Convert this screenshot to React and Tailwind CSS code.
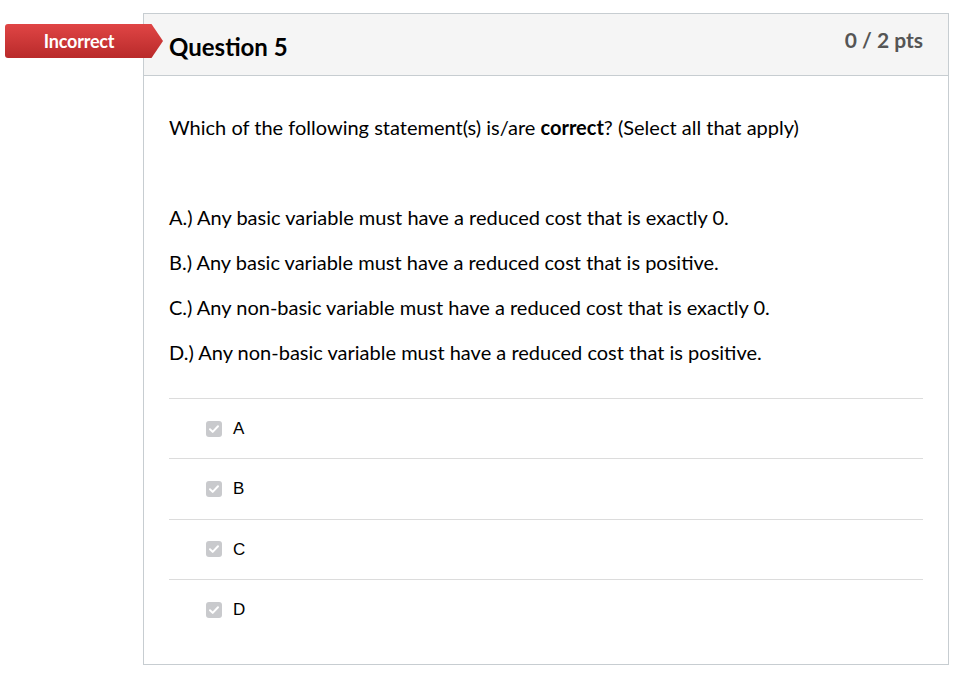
import React from "react";

const options = [
  "A.) Any basic variable must have a reduced cost that is exactly 0.",
  "B.) Any basic variable must have a reduced cost that is positive.",
  "C.) Any non-basic variable must have a reduced cost that is exactly 0.",
  "D.) Any non-basic variable must have a reduced cost that is positive.",
];

function Check() {
  return (
    <span className="flex h-[16px] w-[16px] items-center justify-center rounded-[3px] bg-[#c9cacd]">
      <svg width="12" height="12" viewBox="0 0 12 12" fill="none">
        <path d="M2 6.3 L4.7 8.9 L10 3.3" stroke="white" strokeWidth="2" strokeLinecap="round" strokeLinejoin="round" />
      </svg>
    </span>
  );
}

export default function App() {
  return (
    <div className="min-h-[676px] w-[976px] bg-white pt-[13px]" style={{ fontFamily: "Lato, 'Open Sans', sans-serif" }}>
      <div className="relative ml-[143px] w-[806px] border border-[#c7cdd1]">
        <div className="absolute left-[-139px] top-[10px] flex h-[34px] w-[158px] items-stretch">
          <div className="flex w-[146px] items-center justify-center rounded-l-[3px] bg-gradient-to-b from-[#e04545] to-[#b92a2a] text-[18px] font-bold text-white">
            <span className="pl-[2px] tracking-[-0.2px]">Incorrect</span>
          </div>
          <svg width="12" height="34" viewBox="0 0 12 34" className="block">
            <defs>
              <linearGradient id="g" x1="0" y1="0" x2="0" y2="1">
                <stop offset="0" stopColor="#e04545" />
                <stop offset="1" stopColor="#b92a2a" />
              </linearGradient>
            </defs>
            <path d="M0 0 L0.5 0 L12 17 L0.5 34 L0 34 Z" fill="url(#g)" />
          </svg>
        </div>
        <div className="flex h-[62px] items-start justify-between border-b border-[#c7cdd1] bg-[#f5f5f5] pl-[25px] pr-[25px]">
          <h2 className="mt-[19px] text-[24px] font-bold leading-[28px] text-black">Question 5</h2>
          <div className="mt-[12px] text-[21px] font-bold leading-[28px] text-[#555]">0 / 2 pts</div>
        </div>
        <div className="pl-[25px] pr-[25px] pb-[24px] text-black">
          <p className="mt-[38px] text-[20px] leading-[27px]">
            Which of the following statement(s) is/are <b>correct</b>? (Select all that apply)
          </p>
          <div className="mt-[63px] flex flex-col gap-[18px]">
            {options.map((o) => (
              <p key={o} className="text-[20px] leading-[27px]">{o}</p>
            ))}
          </div>
          <div className="mt-[32px]">
            {["A", "B", "C", "D"].map((l) => (
              <div key={l} className="flex h-[60.4px] items-center gap-[11px] border-t border-[#dcdcdc] pl-[37px]">
                <Check />
                <span className="text-[17px] text-black" style={{ fontFamily: "'Liberation Sans', Arial, sans-serif" }}>{l}</span>
              </div>
            ))}
          </div>
        </div>
      </div>
    </div>
  );
}
